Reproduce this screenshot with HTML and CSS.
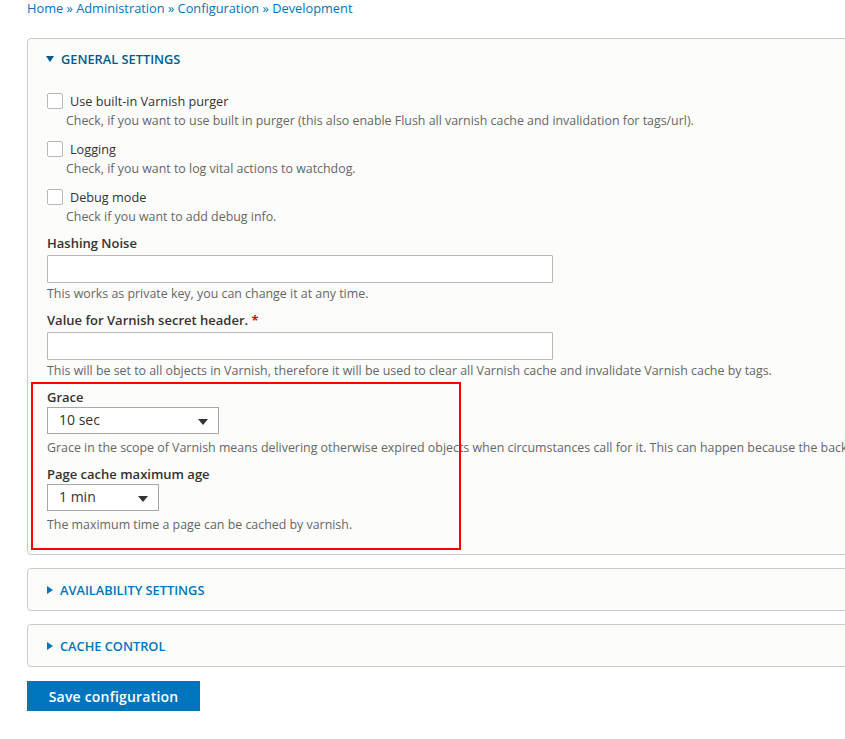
FILE: index.html
```html
<!DOCTYPE html>
<html lang="en">
<head>
<meta charset="utf-8">
<title>Development</title>
<link rel="stylesheet" href="styles.css">
</head>
<body>
<div class="page">
  <nav class="breadcrumb">
    <a href="#">Home</a> » <a href="#">Administration</a> » <a href="#">Configuration</a> » <a href="#">Development</a>
  </nav>

  <form class="form">
    <section class="details open">
      <div class="summary"><span class="tri down"></span>General settings</div>
      <div class="wrapper">
        <div class="check-item">
          <div class="check-row"><span class="checkbox"></span><span class="check-label">Use built-in Varnish purger</span></div>
          <div class="desc">Check, if you want to use built in purger (this also enable Flush all varnish cache and invalidation for tags/url).</div>
        </div>
        <div class="check-item">
          <div class="check-row"><span class="checkbox"></span><span class="check-label">Logging</span></div>
          <div class="desc">Check, if you want to log vital actions to watchdog.</div>
        </div>
        <div class="check-item">
          <div class="check-row"><span class="checkbox"></span><span class="check-label">Debug mode</span></div>
          <div class="desc">Check if you want to add debug info.</div>
        </div>

        <div class="field first-field">
          <div class="label">Hashing Noise</div>
          <div class="text-input"></div>
          <div class="desc">This works as private key, you can change it at any time.</div>
        </div>
        <div class="field">
          <div class="label">Value for Varnish secret header. <span class="req">*</span></div>
          <div class="text-input"></div>
          <div class="desc">This will be set to all objects in Varnish, therefore it will be used to clear all Varnish cache and invalidate Varnish cache by tags.</div>
        </div>
        <div class="field">
          <div class="label">Grace</div>
          <div class="select select-grace"><span>10 sec</span><span class="arrow"></span></div>
          <div class="desc">Grace in the scope of Varnish means delivering otherwise expired objects when circumstances call for it. This can happen because the backend-director selected is down or a different thread has already made a request to the backend that's not yet finished.</div>
        </div>
        <div class="field">
          <div class="label">Page cache maximum age</div>
          <div class="select select-age"><span>1 min</span><span class="arrow"></span></div>
          <div class="desc">The maximum time a page can be cached by varnish.</div>
        </div>
      </div>
    </section>

    <section class="details collapsed">
      <div class="summary"><span class="tri right"></span>Availability settings</div>
    </section>
    <section class="details collapsed">
      <div class="summary"><span class="tri right"></span>Cache control</div>
    </section>

    <div class="actions"><span class="button">Save configuration</span></div>
  </form>

  <div class="highlight"></div>
</div>
</body>
</html>
```
FILE: styles.css
```css
html, body {
  margin: 0;
  padding: 0;
  background: #fff;
  overflow: hidden;
}
body {
  font-family: "Open Sans", "Noto Sans", sans-serif;
  font-size: 13px;
  color: #333;
  width: 845px;
  height: 739px;
}
.page {
  position: relative;
  width: 1400px;
  padding-left: 27px;
}
.breadcrumb {
  height: 17px;
  line-height: 17px;
  font-size: 12.8px;
  color: #0074bd;
}
.breadcrumb a {
  color: #0074bd;
  text-decoration: none;
}
.form {
  margin-top: 21px;
  width: 1300px;
}
.details {
  border: 1px solid #ccc;
  border-radius: 4px;
  background: #fcfcfa;
  margin-bottom: 13px;
}
.summary {
  height: 40px;
  line-height: 40px;
  padding-left: 18px;
  font-size: 12.8px;
  font-weight: 600;
  text-transform: uppercase;
  color: #0074bd;
  display: flex;
  align-items: center;
}
.collapsed .summary {
  height: 41px;
}
.open .summary {
  color: #005a8f;
}
.tri {
  display: inline-block;
  width: 0;
  height: 0;
  margin-right: 7px;
}
.tri.down {
  border-left: 4px solid transparent;
  border-right: 4px solid transparent;
  border-top: 6px solid #005a8f;
}
.tri.right {
  border-top: 4px solid transparent;
  border-bottom: 4px solid transparent;
  border-left: 6px solid #0074bd;
  margin-left: 1px;
  margin-right: 7px;
}
.wrapper {
  padding: 13px 19px 20px 19px;
}
.check-item {
  margin-bottom: 10px;
}
.check-row {
  display: flex;
  align-items: center;
  height: 18px;
  line-height: 18px;
}
.checkbox {
  width: 14px;
  height: 14px;
  border: 1px solid #b8b8b8;
  border-radius: 2px;
  background: #fff;
  margin-right: 7px;
  box-sizing: content-box;
}
.check-label {
  font-size: 12.7px;
  color: #333;
}
.check-item .desc {
  padding-left: 19px;
  margin-top: 1px;
}
.desc {
  font-size: 12.4px;
  line-height: 19px;
  color: #666;
  white-space: nowrap;
}
.field {
  margin-top: 8px;
}
.first-field {
  margin-top: -2px;
}
.label {
  font-size: 13px;
  font-weight: 600;
  line-height: 18px;
  color: #333;
}
.req {
  color: #e00;
  font-weight: 700;
}
.text-input {
  margin-top: 3px;
  width: 504px;
  height: 26px;
  border: 1px solid #b8b8b8;
  border-radius: 1px;
  background: #fff;
  margin-bottom: 1px;
}
.select {
  margin-top: 1px;
  height: 25px;
  border: 1px solid #a8a8a8;
  background: #fff;
  display: flex;
  align-items: center;
  justify-content: space-between;
  padding: 0 10px 0 11px;
  font-size: 14px;
  color: #333;
  margin-bottom: 4px;
  box-sizing: content-box;
}
.select span:first-child {
  margin-top: -3px;
}
.select-grace {
  width: 149px;
}
.select-age {
  width: 89px;
}
.arrow {
  width: 0;
  height: 0;
  border-left: 5px solid transparent;
  border-right: 5px solid transparent;
  border-top: 6px solid #333;
  margin-top: 3px;
}
.actions {
  margin-top: 14px;
}
.button {
  display: inline-flex;
  align-items: center;
  justify-content: center;
  width: 173px;
  height: 30px;
  background: #0074bd;
  color: #fff;
  font-size: 14px;
  font-weight: 600;
  letter-spacing: 0.2px;
}
.highlight {
  position: absolute;
  left: 31px;
  top: 382px;
  width: 426px;
  height: 164px;
  border: 2px solid #f00;
}
```
